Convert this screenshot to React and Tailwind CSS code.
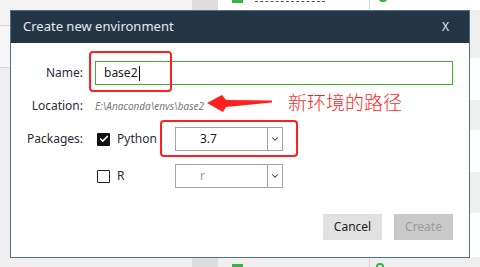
import { Check, ChevronDown } from 'lucide-react'

function Select({ value, muted }) {
  return (
    <div className="flex h-6 w-[108px] border border-[#a3a3a3] bg-white">
      <div className={`flex-1 pl-6 text-[12px] leading-[22px] ${muted ? 'text-[#9a9a9a]' : 'text-[#222]'}`}>
        {value}
      </div>
      <div className="flex w-[15px] items-center justify-center border-l border-[#a3a3a3]">
        <ChevronDown size={10} strokeWidth={2.5} className="text-[#333]" />
      </div>
    </div>
  )
}

function Checkbox({ checked }) {
  return checked ? (
    <div className="flex h-[13px] w-[13px] items-center justify-center rounded-[1px] bg-[#111]">
      <Check size={10} strokeWidth={4} className="text-white" />
    </div>
  ) : (
    <div className="h-[13px] w-[13px] rounded-[1px] border-[1.5px] border-[#222] bg-white" />
  )
}

export default function App() {
  return (
    <div className="relative h-[267px] w-[480px] overflow-hidden bg-[#eeeeee] font-['Noto_Sans','Open_Sans',sans-serif]">
      {/* Background app */}
      <div className="flex h-full">
        <div className="flex w-[192px] flex-col">
          <div className="h-[26px] border-b border-[#d6d6d6] bg-[#f4f4f4]" />
          <div className="h-[42px] border-b border-[#d6d6d6] bg-[#f6f6f6]" />
          <div className="flex-1 bg-[#eeeeee]" />
        </div>
        <div className="w-[26px] bg-[#dddddd]" />
        <div className="flex w-[152px] flex-col border-r border-[#d8d8d8]">
          <div className="flex h-[10px] items-start gap-3 bg-white pl-[14px]">
            <div className="h-[3px] w-[11px] bg-[#3cb043]" />
            <div className="mt-[1px] h-[1px] w-[70px] border-t border-dashed border-[#555]" />
          </div>
          <div className="flex-1 bg-white" />
          <div className="flex h-[10px] items-end bg-[#eeeeee] pl-[14px]">
            <div className="h-[3px] w-[11px] bg-[#3cb043]" />
          </div>
        </div>
        <div className="flex flex-1 flex-col">
          <div className="flex h-[10px] items-start bg-white pl-[9px]">
            <div className="-mt-[4px] h-[6px] w-[8px] rounded-full bg-[#3cb043]" />
          </div>
          <div className="h-[48px] bg-[#eeeeee]" />
          <div className="h-[42px] bg-white" />
          <div className="h-[30px] bg-[#eeeeee]" />
          <div className="h-[42px] bg-white" />
          <div className="h-[41px] bg-[#eeeeee]" />
          <div className="h-[44px] bg-white" />
          <div className="flex flex-1 items-end bg-[#eeeeee] pl-[6px]">
            <div className="-mb-[3px] h-[7px] w-[8px] rounded-full border-2 border-[#3cb043]" />
          </div>
        </div>
      </div>

      {/* Dialog */}
      <div className="absolute left-[10px] top-[10px] flex h-[248px] w-[460px] flex-col border border-[#4b7490] bg-white">
        <div className="flex h-[32px] items-center justify-between bg-[#243646] pl-3 pr-[20px] text-[13px] text-[#e6e9ec]">
          <span>Create new environment</span>
          <span className="text-[12px]">X</span>
        </div>

        <div className="relative flex flex-1 flex-col pr-[16px] text-[12px] text-[#2c2c38]">
          {/* Name */}
          <div className="mt-[18px] flex h-6 items-center">
            <div className="w-[72px] text-right">Name:</div>
            <div className="ml-3 flex h-6 flex-1 items-center border border-[#43ad35] pl-[8px] text-[#222]">
              base2<span className="ml-[1px] h-[15px] w-[1px] bg-[#111]" />
            </div>
          </div>

          {/* Location */}
          <div className="mt-[11px] flex h-5 items-center">
            <div className="w-[72px] text-right">Location:</div>
            <div className="ml-3 text-[10px] italic text-[#7a7a7a]">E:\Anaconda\envs\base2</div>
          </div>

          {/* Python */}
          <div className="mt-[11px] flex h-6 items-center">
            <div className="w-[72px] text-right">Packages:</div>
            <div className="ml-3 flex w-[80px] items-center pl-[2px]">
              <Checkbox checked />
              <span className="ml-[7px]">Python</span>
            </div>
            <Select value="3.7" />
          </div>

          {/* R */}
          <div className="mt-[13px] flex h-6 items-center">
            <div className="w-[72px]" />
            <div className="ml-3 flex w-[80px] items-center pl-[2px]">
              <Checkbox />
              <span className="ml-[7px]">R</span>
            </div>
            <Select value="r" muted />
          </div>

          {/* Buttons */}
          <div className="mt-[26px] flex justify-end gap-3">
            <button className="h-[26px] w-[59px] bg-[#e1e1e1] text-[12px] text-[#222]">Cancel</button>
            <button className="h-[26px] w-[59px] bg-[#c9c9c9] text-[12px] text-[#9b9b9b]">Create</button>
          </div>

          {/* Annotations */}
          <div className="absolute left-[78px] top-[8px] h-[41px] w-[83px] rounded-[4px] border-2 border-[#ff1f1f]" />
          <div className="absolute left-[149px] top-[77px] h-[37px] w-[138px] rounded-[4px] border-2 border-[#ff1f1f]" />
          <svg className="absolute left-[189px] top-[45px]" width="80" height="26" viewBox="0 0 80 26">
            <polygon points="7,15 22,7 26,12 72,12.5 72,14.5 26,19 23,24" fill="#ff1f1f" />
          </svg>
          <div className="absolute left-[277px] top-[47px] font-['Noto_Sans_CJK_SC',sans-serif] text-[19px] font-light leading-[24px] text-[#ff1f1f]">
            新环境的路径
          </div>
        </div>
      </div>
    </div>
  )
}
